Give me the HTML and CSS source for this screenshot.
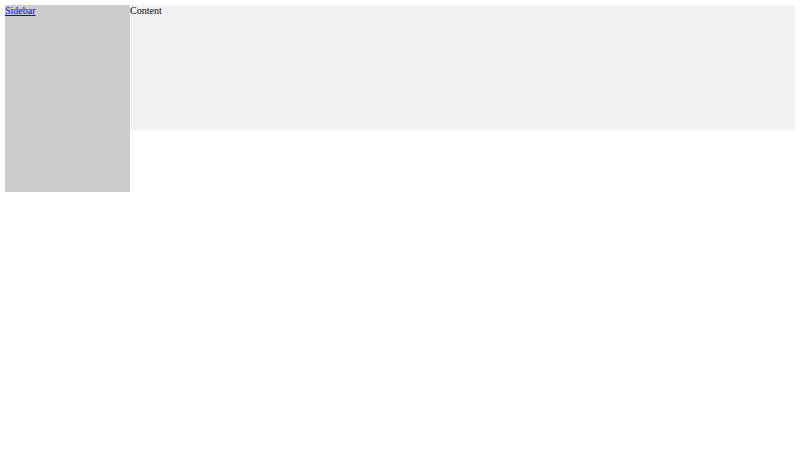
FILE: index.html
```html
<!DOCTYPE html>
<html>
<head>
<meta charset="utf-8">
<link rel="stylesheet" href="styles.css">
</head>
<body>
<div class="layout">
  <div class="sidebar"><a href="#">Sidebar</a></div>
  <div class="content">Content</div>
</div>
</body>
</html>
```
FILE: styles.css
```css
html, body {
  margin: 0;
  padding: 0;
  background: #ffffff;
}
body {
  padding: 5px;
  font-family: "Liberation Serif", "Times New Roman", serif;
  font-size: 10px;
  line-height: 1.15;
  color: #000;
}
.layout {
  display: flex;
  align-items: flex-start;
}
.sidebar {
  width: 125px;
  height: 187px;
  flex: none;
  background: #cccccc;
}
.sidebar a {
  color: #0000ee;
  text-decoration: underline;
}
.content {
  flex: 1;
  height: 125px;
  background: #f2f2f2;
}
```
